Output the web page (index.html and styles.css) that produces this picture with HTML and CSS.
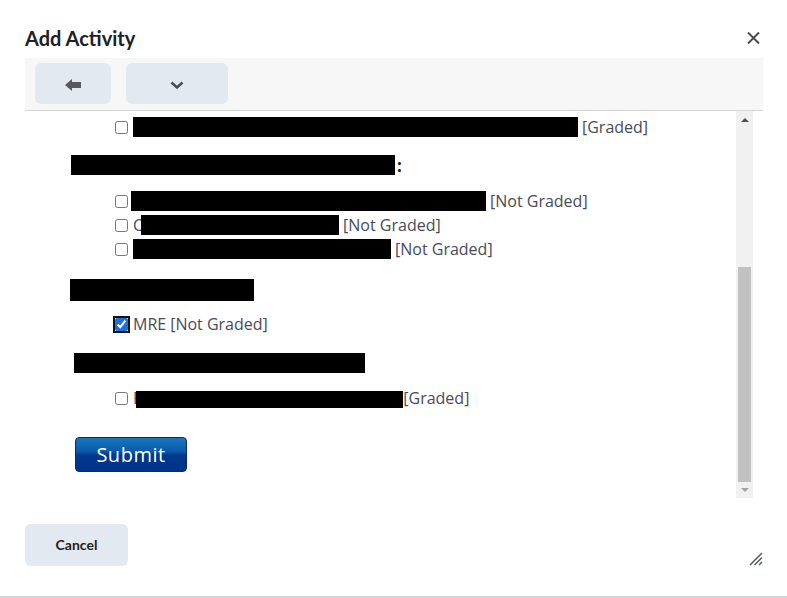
FILE: index.html
```html
<!DOCTYPE html>
<html lang="en">
<head>
<meta charset="utf-8">
<title>Add Activity</title>
<link rel="stylesheet" href="styles.css">
</head>
<body>
<div class="dialog">
  <div class="header">
    <h1 class="title">Add Activity</h1>
    <button class="close" aria-label="Close">
      <svg width="13" height="12" viewBox="0 0 13 12"><path d="M1 0.5 L12 11.5 M12 0.5 L1 11.5" stroke="#494c4e" stroke-width="2" fill="none"/></svg>
    </button>
  </div>
  <div class="toolbar">
    <button class="tb-btn back" aria-label="Back">
      <svg width="16" height="12" viewBox="0 0 16 12"><path d="M0 6 L7 0 V3 H16 V9 H7 V12 Z" fill="#565a5c"/></svg>
    </button>
    <button class="tb-btn more" aria-label="More">
      <svg width="14" height="8" viewBox="0 0 14 8"><polyline points="1.5,1.5 7,6.5 12.5,1.5" stroke="#494c4e" stroke-width="2.5" fill="none"/></svg>
    </button>
  </div>
  <div class="frame">
    <div class="content">
      <div class="item"><input type="checkbox"><span class="redact rw1"></span><span class="tag">[Graded]</span></div>

      <div class="group-head h1"><span class="redact rh1"></span><span class="colon">:</span></div>
      <div class="item first"><input type="checkbox"><span class="redact rw2 pull"></span><span class="tag">[Not Graded]</span></div>
      <div class="item"><input type="checkbox"><span class="lead">C</span><span class="redact rw3 overlap"></span><span class="tag">[Not Graded]</span></div>
      <div class="item"><input type="checkbox"><span class="redact rw4"></span><span class="tag">[Not Graded]</span></div>

      <div class="group-head h2"><span class="redact rh2 tall"></span></div>
      <div class="item mre"><input type="checkbox" class="focused" checked><span class="label">MRE</span><span class="tag">[Not Graded]</span></div>

      <div class="group-head h3"><span class="redact rh3"></span></div>
      <div class="item last"><input type="checkbox"><span class="lead">F</span><span class="redact rw5 overlap-more short"></span><span class="tag flush">[Graded]</span></div>

      <button class="submit">Submit</button>
    </div>
    <div class="scrollbar">
      <div class="sb-up"><span class="tri-up"></span></div>
      <div class="sb-track"><div class="sb-thumb"></div></div>
      <div class="sb-down"><span class="tri-down"></span></div>
    </div>
  </div>
  <div class="footer">
    <button class="cancel">Cancel</button>
    <svg class="resize" width="14" height="14" viewBox="0 0 14 14"><path d="M1 13 L13 1 M5.5 13 L13 5.5 M10 13 L13 10" stroke="#555a5c" stroke-width="1.5" fill="none"/></svg>
  </div>
</div>
</body>
</html>
```

FILE: styles.css
```css
* { box-sizing: border-box; }

html, body {
  margin: 0;
  background: #ffffff;
  font-family: Lato, "Open Sans", sans-serif;
}

.dialog {
  height: 598px;
  padding: 0 24px 0 25px;
  background: #ffffff;
  border-bottom: 2px solid #cfd6de;
}

.header {
  display: flex;
  align-items: center;
  justify-content: space-between;
  height: 58px;
  padding-top: 18px;
}

.title {
  margin: 0;
  font-size: 20px;
  font-weight: 700;
  line-height: 24px;
  color: #202122;
}

.close {
  display: flex;
  border: 0;
  background: none;
  padding: 0;
  margin-right: 3px;
  cursor: pointer;
}

.toolbar {
  display: flex;
  align-items: flex-start;
  gap: 15px;
  height: 53px;
  padding: 5px 10px 0;
  background: #f7f7f7;
  border-bottom: 1px solid #d6d6d6;
}

.tb-btn {
  display: flex;
  align-items: center;
  justify-content: center;
  height: 41px;
  padding: 2px 0 0;
  border: 0;
  border-radius: 6px;
  background: #e3e9f1;
}

.back { width: 76px; }
.more { width: 102px; }

.frame {
  display: flex;
  height: 387px;
  margin-right: 10px;
}

.content {
  flex: 1;
  padding-top: 4px;
  font-family: "Open Sans", sans-serif;
  font-size: 16px;
  color: #484b58;
}

.item {
  display: flex;
  align-items: center;
  height: 24px;
  padding-left: 90px;
  white-space: nowrap;
}

.item input {
  width: 13px;
  height: 13px;
  margin: 0 5px 0 0;
  flex: none;
}

.item input.focused {
  accent-color: #1f6fdd;
  outline: 2px solid #111111;
  outline-offset: 0;
  border-radius: 3px;
}

.item.first { margin-top: 13px; }
.item.mre { margin-top: 11px; }
.item.last { margin-top: 12px; }

.redact {
  display: inline-block;
  height: 20px;
  background: #000000;
  flex: none;
}

.redact.tall { height: 22px; }
.redact.short { height: 17px; margin-top: 2px; }
.redact.pull { margin-left: -2px; }
.redact.overlap { margin-left: -2px; }
.redact.overlap-more { margin-left: -5px; }

.rw1 { width: 445px; }
.rw2 { width: 355px; }
.rw3 { width: 198px; }
.rw4 { width: 258px; }
.rw5 { width: 267px; }
.rh1 { width: 324px; }
.rh2 { width: 184px; }
.rh3 { width: 291px; }

.lead { line-height: 24px; }
.label { line-height: 24px; }

.tag {
  margin-left: 4px;
  line-height: 24px;
}

.tag.flush { margin-left: 0; }

.group-head {
  display: flex;
  align-items: center;
  height: 22px;
  font-weight: 700;
  color: #202122;
}

.group-head.h1 { margin-top: 15px; padding-left: 46px; }
.group-head.h2 { margin-top: 18px; padding-left: 45px; }
.group-head.h3 { margin-top: 16px; padding-left: 49px; }

.colon {
  margin-left: 2px;
  font-size: 17px;
}

.submit {
  display: block;
  width: 112px;
  height: 35px;
  margin: 27px 0 0 50px;
  padding: 0;
  font-family: "Open Sans", sans-serif;
  font-size: 20px;
  letter-spacing: 0.5px;
  color: #ffffff;
  border: 1px solid #0b2a66;
  border-radius: 4px;
  background: linear-gradient(#1976bd 0%, #0c5ba8 40%, #003a8f 52%, #00318a 100%);
}

.scrollbar {
  display: flex;
  flex-direction: column;
  width: 17px;
  background: #f1f1f1;
}

.sb-up {
  display: flex;
  align-items: center;
  justify-content: center;
  height: 17px;
}

.sb-track {
  flex: 1;
  padding: 0 2px;
}

.sb-thumb {
  height: 215px;
  margin-top: 139px;
  background: #c1c1c1;
}

.sb-down {
  display: flex;
  align-items: center;
  justify-content: center;
  height: 16px;
}

.tri-up {
  width: 0;
  height: 0;
  border-left: 4px solid transparent;
  border-right: 4px solid transparent;
  border-bottom: 4px solid #505050;
}

.tri-down {
  width: 0;
  height: 0;
  border-left: 4px solid transparent;
  border-right: 4px solid transparent;
  border-top: 4px solid #a3a3a3;
}

.footer {
  display: flex;
  align-items: flex-end;
  justify-content: space-between;
  padding-top: 26px;
}

.cancel {
  width: 103px;
  height: 42px;
  padding: 0 0 2px;
  border: 0;
  border-radius: 6px;
  background: #e3e9f1;
  font-family: Lato, sans-serif;
  font-size: 14px;
  font-weight: 700;
  color: #202122;
}

.resize { display: block; }
```
